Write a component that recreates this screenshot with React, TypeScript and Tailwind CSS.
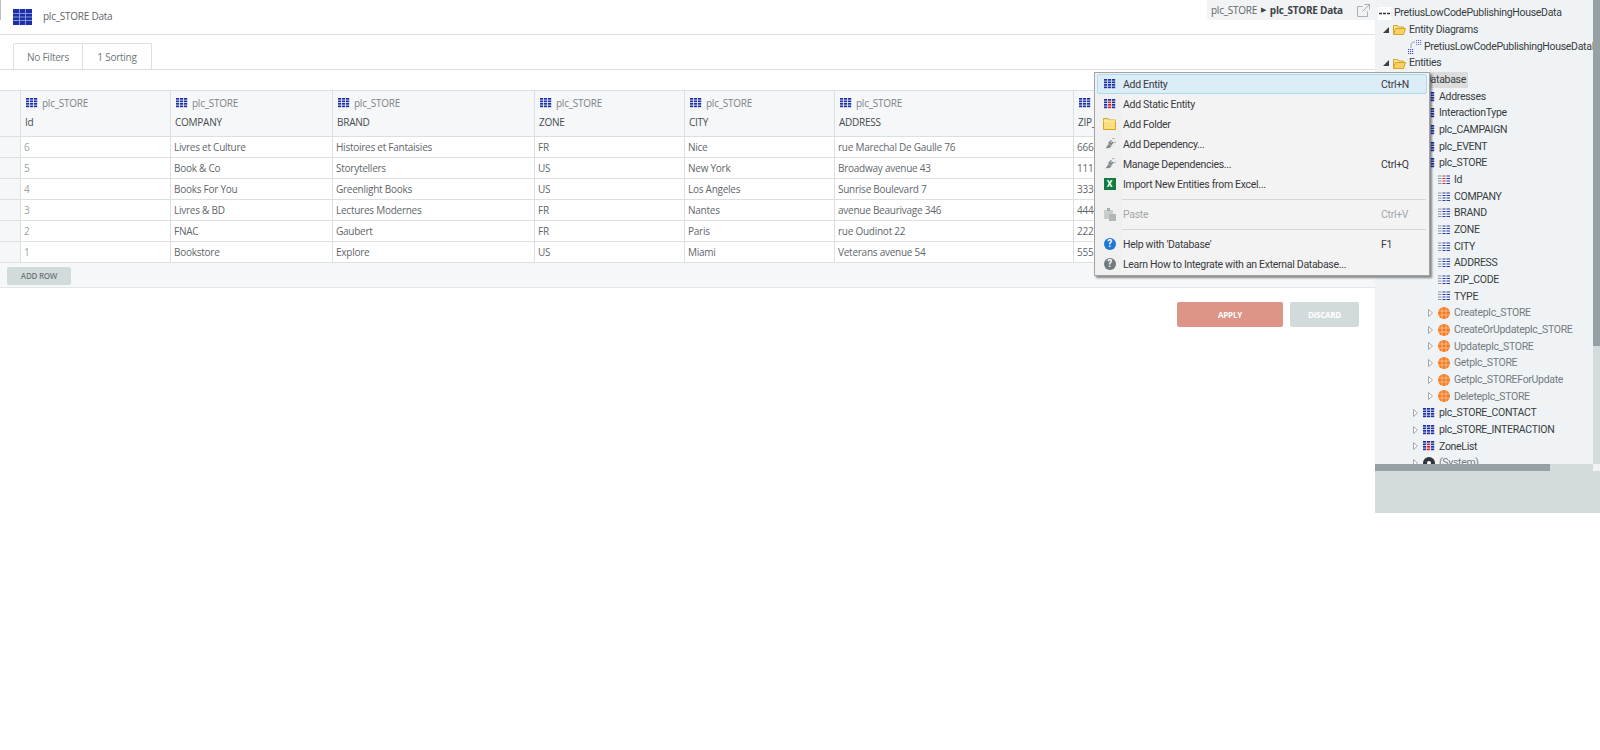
import type { ReactNode } from 'react'

const COLS = 'grid grid-cols-[20px_150px_162px_202px_150px_150px_239px_1fr]'

const columns = ['Id', 'COMPANY', 'BRAND', 'ZONE', 'CITY', 'ADDRESS', 'ZIP_CODE']

const rows = [
  ['6', 'Livres et Culture', 'Histoires et Fantaisies', 'FR', 'Nice', 'rue Marechal De Gaulle 76', '66666'],
  ['5', 'Book & Co', 'Storytellers', 'US', 'New York', 'Broadway avenue 43', '11111'],
  ['4', 'Books For You', 'Greenlight Books', 'US', 'Los Angeles', 'Sunrise Boulevard 7', '33333'],
  ['3', 'Livres & BD', 'Lectures Modernes', 'FR', 'Nantes', 'avenue Beaurivage 346', '44444'],
  ['2', 'FNAC', 'Gaubert', 'FR', 'Paris', 'rue Oudinot 22', '22222'],
  ['1', 'Bookstore', 'Explore', 'US', 'Miami', 'Veterans avenue 54', '55555'],
]

// 3x4 dotted table glyph used all over the tree and the grid header
function Grid({ color = '#1c2fa6', accent }: { color?: string; accent?: string }) {
  const cells = []
  for (let r = 0; r < 4; r++) {
    for (let c = 0; c < 3; c++) {
      const fill = accent && r > 0 && c === 1 ? accent : color
      cells.push(<rect key={`${r}-${c}`} x={c * 4} y={r * 2.5} width="3.2" height="1.7" fill={fill} />)
    }
  }
  return (
    <svg width="12" height="10" viewBox="0 0 12 10" className="shrink-0">
      {cells}
    </svg>
  )
}

function BigTable() {
  return (
    <svg width="19" height="16" viewBox="0 0 19 16" className="shrink-0">
      <rect width="19" height="16" fill="#1c2fa6" />
      <path d="M0 4.500h19M0 8h19M0 11.500h19M6.500 0v16M12.500 0v16" stroke="#8fa0e6" strokeWidth="0.9" />
    </svg>
  )
}

function ColumnIcon({ red }: { red?: boolean }) {
  return (
    <svg width="12" height="10" viewBox="0 0 12 10" className="shrink-0">
      <path d="M0 1h3.500M0 3.500h3.500M0 6h3.500M0 8.500h3.500" stroke="#8d93a8" strokeWidth="1.200" />
      <path d="M4.500 1h3M4.500 3.500h3M4.500 6h3M4.500 8.500h3" stroke={red ? '#d42a2a' : '#2438ad'} strokeWidth="1.200" />
      <path d="M8.500 1H12M8.500 3.500H12M8.500 6H12M8.500 8.500H12" stroke="#2438ad" strokeWidth="1.200" />
    </svg>
  )
}

function DiagramIcon() {
  return (
    <svg width="14" height="14" viewBox="0 0 14 14" className="shrink-0">
      <path d="M3 8V5c0-2 1-3 4-3" fill="none" stroke="#9aa2a8" />
      <path d="M8 .5h6M8 2.500h6M8 4.500h6" stroke="#6f78c4" strokeWidth="1" strokeDasharray="1.200 .8" />
      <path d="M0 9.500h6M0 11.500h6M0 13.500h6" stroke="#3a47b4" strokeWidth="1" strokeDasharray="1.200 .8" />
    </svg>
  )
}

function Globe() {
  return (
    <svg width="12" height="12" viewBox="0 0 12 12" className="shrink-0">
      <circle cx="6" cy="6" r="6" fill="#f47b20" />
      <path d="M0 4h12M0 8h12M4 0v12M8 0v12" stroke="#fbc79a" strokeWidth="0.8" />
    </svg>
  )
}

function OpenFolder() {
  return (
    <svg width="13" height="11" viewBox="0 0 13 11" className="shrink-0">
      <path d="M.5 10V1.500h4l1 1.500h5v2" fill="#f7e3a5" stroke="#d9a520" />
      <path d="M.5 10.500l2-6h10l-2 6z" fill="#fbd164" stroke="#d9a520" />
    </svg>
  )
}

function Folder() {
  return (
    <svg width="13" height="12" viewBox="0 0 13 12">
      <path d="M.5 11.500V.5h4.500l1 1.500h6.500v9.500z" fill="#fbdc7f" stroke="#d9a520" />
      <path d="M.5 3h12" stroke="#fff3c4" />
    </svg>
  )
}

function Plug() {
  return (
    <svg width="13" height="12" viewBox="0 0 13 12">
      <path d="M0 11.500c2-.5 2.500-1 3.500-2.500l2-3 3 2.500c-1.500 1.500-3 2-5 1.500" fill="#7f8a8d" />
      <path d="M5 5l3-3 1 .8-2 2.500 3-1.800.8 1L8 8z" fill="#7f8a8d" />
      <path d="M9 1l3-1M11 5l2-1" stroke="#aab2b5" />
    </svg>
  )
}

function Paste() {
  return (
    <svg width="12" height="13" viewBox="0 0 12 13">
      <path d="M0 2h9v9H0z" fill="#c9cccd" />
      <path d="M3 0h3v3H3z" fill="#a9adae" />
      <path d="M5 6h7v7H5z" fill="#b2b6b7" />
    </svg>
  )
}

function Round({ bg }: { bg: string }) {
  return (
    <span className={`${bg} flex h-[12px] w-[12px] items-center justify-center rounded-full text-[10px] leading-none font-bold text-white`}>
      ?
    </span>
  )
}

function Arrow({ open }: { open?: boolean }) {
  return (
    <span className="flex w-[15px] shrink-0 items-center justify-center">
      {open ? (
        <svg width="6" height="6" viewBox="0 0 6 6">
          <path d="M6 0v6H0z" fill="#404040" />
        </svg>
      ) : (
        <svg width="5" height="8" viewBox="0 0 5 8">
          <path d="M.5.500l4 3.500-4 3.500z" fill="#fff" stroke="#a6a6a6" />
        </svg>
      )}
    </span>
  )
}

function TreeRow({
  pad,
  arrow,
  icon,
  children,
  muted,
  selected,
}: {
  pad: string
  arrow?: 'open' | 'closed' | 'none'
  icon: ReactNode
  children: ReactNode
  muted?: boolean
  selected?: boolean
}) {
  return (
    <div className={`${pad} flex h-[16.66px] items-center whitespace-nowrap`}>
      {arrow && (arrow === 'none' ? <span className="w-[15px] shrink-0" /> : <Arrow open={arrow === 'open'} />)}
      <span className="flex w-[15px] shrink-0 items-center">{icon}</span>
      <span className={`${muted ? 'text-[#747b7f]' : 'text-[#383d40]'} ${selected ? 'bg-[#dcdcdc]' : ''} pl-px pr-[2px]`}>{children}</span>
    </div>
  )
}

function MenuItem({
  icon,
  label,
  shortcut,
  active,
  disabled,
}: {
  icon: ReactNode
  label: string
  shortcut?: string
  active?: boolean
  disabled?: boolean
}) {
  return (
    <div
      className={`mx-[2px] flex h-[20px] items-center rounded-[2px] border whitespace-nowrap ${
        active ? 'border-[#a9dcf3] bg-[#dcedf7]' : 'border-transparent'
      } ${disabled ? 'text-[#a3a7a9]' : 'text-[#3a3a40]'}`}
    >
      <span className="flex w-[23px] shrink-0 items-center justify-center">{icon}</span>
      <span className="w-[260px] pt-px pl-[2px]">{label}</span>
      <span className="pt-px">{shortcut}</span>
    </div>
  )
}

export default function App() {
  return (
    <div className="relative flex h-[750px] w-[1600px] overflow-hidden bg-white font-['Open_Sans',sans-serif] text-[10px] tracking-[-0.25px]">
      <div className="w-[1375px] shrink-0">
        <div className="flex h-[35px] justify-between border-b border-[#dbe1e3]">
          <div className="flex h-[34px] items-start">
            <div className="h-[20px] w-px bg-[#b8c0c4]" />
            <div className="flex h-[33px] items-center pl-[12px]">
              <BigTable />
              <span className="ml-[11px] text-[#5f676b]">plc_STORE Data</span>
            </div>
          </div>
          <div className="flex h-[20px] w-[168px] items-center rounded-bl-[4px] bg-[#f1f3f4] pl-[4px] whitespace-nowrap text-[#5f676b]">
            <span>plc_STORE</span>
            <span className="mx-[4px] text-[7px] text-[#444]">▶</span>
            <span className="font-bold text-[#3d4447]">plc_STORE Data</span>
            <svg width="13" height="13" viewBox="0 0 13 13" fill="none" stroke="#a9b1b4" className="ml-[14px] shrink-0">
              <path d="M10.500 7.500v5h-10v-10h5M7.500.500h5v5M12.500.500l-7 7" />
            </svg>
          </div>
        </div>

        <div className="h-[35px] border-b border-[#dbe1e3] pt-[8px] pl-[13px]">
          <div className="flex h-[27px] w-fit rounded-t-[2px] border border-b-0 border-[#dbe1e3] text-[#6f777b]">
            <span className="flex w-[69px] items-center justify-center border-r border-[#dbe1e3]">No Filters</span>
            <span className="flex w-[68px] items-center justify-center">1 Sorting</span>
          </div>
        </div>

        <div className="mt-[20px] border-t border-[#dbe1e3]">
          <div className={`${COLS} h-[46px] border-b border-[#dbe1e3] bg-[#f5f7f8]`}>
            <div />
            {columns.map((name) => (
              <div key={name} className="border-l border-[#dbe1e3] pt-[5px] pl-[4px]">
                <div className="flex h-[14px] items-center gap-[4px] pl-px text-[#7c8488]">
                  <Grid />
                  plc_STORE
                </div>
                <div className="mt-[5px] text-[#454c50]">{name}</div>
              </div>
            ))}
          </div>
          {rows.map((row) => (
            <div key={row[0]} className={`${COLS} h-[21px] border-b border-[#dbe1e3]`}>
              <div className="bg-[#f5f7f8]" />
              {row.map((value, i) => (
                <div
                  key={i}
                  className={`flex items-center border-l border-[#dbe1e3] pt-px pl-[3px] ${i === 0 ? 'text-[#9aa2a6]' : 'text-[#5f676b]'}`}
                >
                  {value}
                </div>
              ))}
            </div>
          ))}
          <div className="h-[25px] border-b border-[#e3e7e9] bg-[#f5f7f8] pt-[4px] pl-[7px]">
            <button className="flex h-[18px] w-[64px] items-center justify-center rounded-[2px] bg-[#d2dbdc] text-[8px] font-semibold text-[#6f797d]">
              ADD ROW
            </button>
          </div>
        </div>

        <div className="mt-[14px] flex justify-end gap-[7px] pr-[16px] text-[8px] font-bold text-white">
          <button className="h-[25px] w-[106px] rounded-[2px] bg-[#dd9588]">APPLY</button>
          <button className="h-[25px] w-[69px] rounded-[2px] bg-[#d2dbdc]">DISCARD</button>
        </div>
      </div>

      <div className="flex h-[513px] w-[225px] shrink-0 flex-col bg-[#d3dbdc] font-['Roboto',sans-serif] text-[10.5px] tracking-[-0.3px]">
        <div className="flex h-[464px]">
          <div className="w-[218px] overflow-hidden bg-[#eff3f6] pt-[5px]">
            <TreeRow
              pad="pl-[3px]"
              icon={
                <svg width="13" height="13" viewBox="0 0 13 13">
                  <rect width="13" height="13" fill="#fff" />
                  <path d="M1 6.500h3M5 6.500h3M9 6.500h3" stroke="#30363a" strokeWidth="1.400" />
                </svg>
              }
            >
              PretiusLowCodePublishingHouseData
            </TreeRow>
            <TreeRow pad="pl-[3px]" arrow="open" icon={<OpenFolder />}>Entity Diagrams</TreeRow>
            <TreeRow pad="pl-[18px]" arrow="none" icon={<DiagramIcon />}>PretiusLowCodePublishingHouseDataDiagram</TreeRow>
            <TreeRow pad="pl-[3px]" arrow="open" icon={<OpenFolder />}>Entities</TreeRow>
            <TreeRow pad="pl-[18px]" arrow="open" icon={<span />} selected>Database</TreeRow>
            <TreeRow pad="pl-[33px]" arrow="closed" icon={<Grid />}>Addresses</TreeRow>
            <TreeRow pad="pl-[33px]" arrow="closed" icon={<Grid accent="#d42a2a" />}>InteractionType</TreeRow>
            <TreeRow pad="pl-[33px]" arrow="closed" icon={<Grid />}>plc_CAMPAIGN</TreeRow>
            <TreeRow pad="pl-[33px]" arrow="closed" icon={<Grid />}>plc_EVENT</TreeRow>
            <TreeRow pad="pl-[33px]" arrow="open" icon={<Grid />}>plc_STORE</TreeRow>
            <TreeRow pad="pl-[48px]" arrow="none" icon={<ColumnIcon red />}>Id</TreeRow>
            {['COMPANY', 'BRAND', 'ZONE', 'CITY', 'ADDRESS', 'ZIP_CODE', 'TYPE'].map((name) => (
              <TreeRow key={name} pad="pl-[48px]" arrow="none" icon={<ColumnIcon />}>
                {name}
              </TreeRow>
            ))}
            {['Createplc_STORE', 'CreateOrUpdateplc_STORE', 'Updateplc_STORE', 'Getplc_STORE', 'Getplc_STOREForUpdate', 'Deleteplc_STORE'].map((name) => (
              <TreeRow key={name} pad="pl-[48px]" arrow="closed" icon={<Globe />} muted>
                {name}
              </TreeRow>
            ))}
            <TreeRow pad="pl-[33px]" arrow="closed" icon={<Grid />}>plc_STORE_CONTACT</TreeRow>
            <TreeRow pad="pl-[33px]" arrow="closed" icon={<Grid />}>plc_STORE_INTERACTION</TreeRow>
            <TreeRow pad="pl-[33px]" arrow="closed" icon={<Grid accent="#d42a2a" />}>ZoneList</TreeRow>
            <TreeRow
              pad="pl-[33px]"
              arrow="closed"
              muted
              icon={
                <svg width="12" height="12" viewBox="0 0 12 12">
                  <circle cx="6" cy="6" r="6" fill="#30363a" />
                  <circle cx="6" cy="6" r="2" fill="#fff" />
                </svg>
              }
            >
              (System)
            </TreeRow>
          </div>
          <div className="w-[7px] bg-[#d3dbdc]">
            <div className="h-[346px] bg-[#95a1a5]" />
          </div>
        </div>
        <div className="flex h-[7px]">
          <div className="w-[175px] bg-[#95a1a5]" />
          <div className="w-[43px] bg-[#d3dbdc]" />
          <div className="w-[7px] bg-[#eff3f6]" />
        </div>
      </div>

      {/* context menu floats over the grid and the tree */}
      <div className="absolute top-[72px] left-[1094px] w-[336px] border border-[#a3a3a3] bg-[#f3f3f3] py-px font-['Roboto',sans-serif] text-[10.5px] tracking-[-0.3px] shadow-[2px_2px_2px_rgba(0,0,0,0.45)]">
        <div className="absolute top-0 bottom-0 left-0 w-[27px] bg-[#f0f0f0]" />
        <div className="relative">
          <MenuItem icon={<Grid />} label="Add Entity" shortcut="Ctrl+N" active />
          <MenuItem icon={<Grid accent="#d42a2a" />} label="Add Static Entity" />
          <MenuItem icon={<Folder />} label="Add Folder" />
          <MenuItem icon={<Plug />} label="Add Dependency..." />
          <MenuItem icon={<Plug />} label="Manage Dependencies..." shortcut="Ctrl+Q" />
          <MenuItem
            icon={<span className="flex h-[12px] w-[12px] items-center justify-center bg-[#107c41] text-[9px] leading-none font-bold text-white">X</span>}
            label="Import New Entities from Excel..."
          />
          <div className="my-[4.5px] ml-[27px] mr-[3px] border-t border-[#d7d7d7]" />
          <MenuItem icon={<Paste />} label="Paste" shortcut="Ctrl+V" disabled />
          <div className="my-[4.5px] ml-[27px] mr-[3px] border-t border-[#d7d7d7]" />
          <MenuItem icon={<Round bg="bg-[#1b78d6]" />} label="Help with 'Database'" shortcut="F1" />
          <MenuItem icon={<Round bg="bg-[#6f7b80]" />} label="Learn How to Integrate with an External Database..." />
        </div>
      </div>
    </div>
  )
}
